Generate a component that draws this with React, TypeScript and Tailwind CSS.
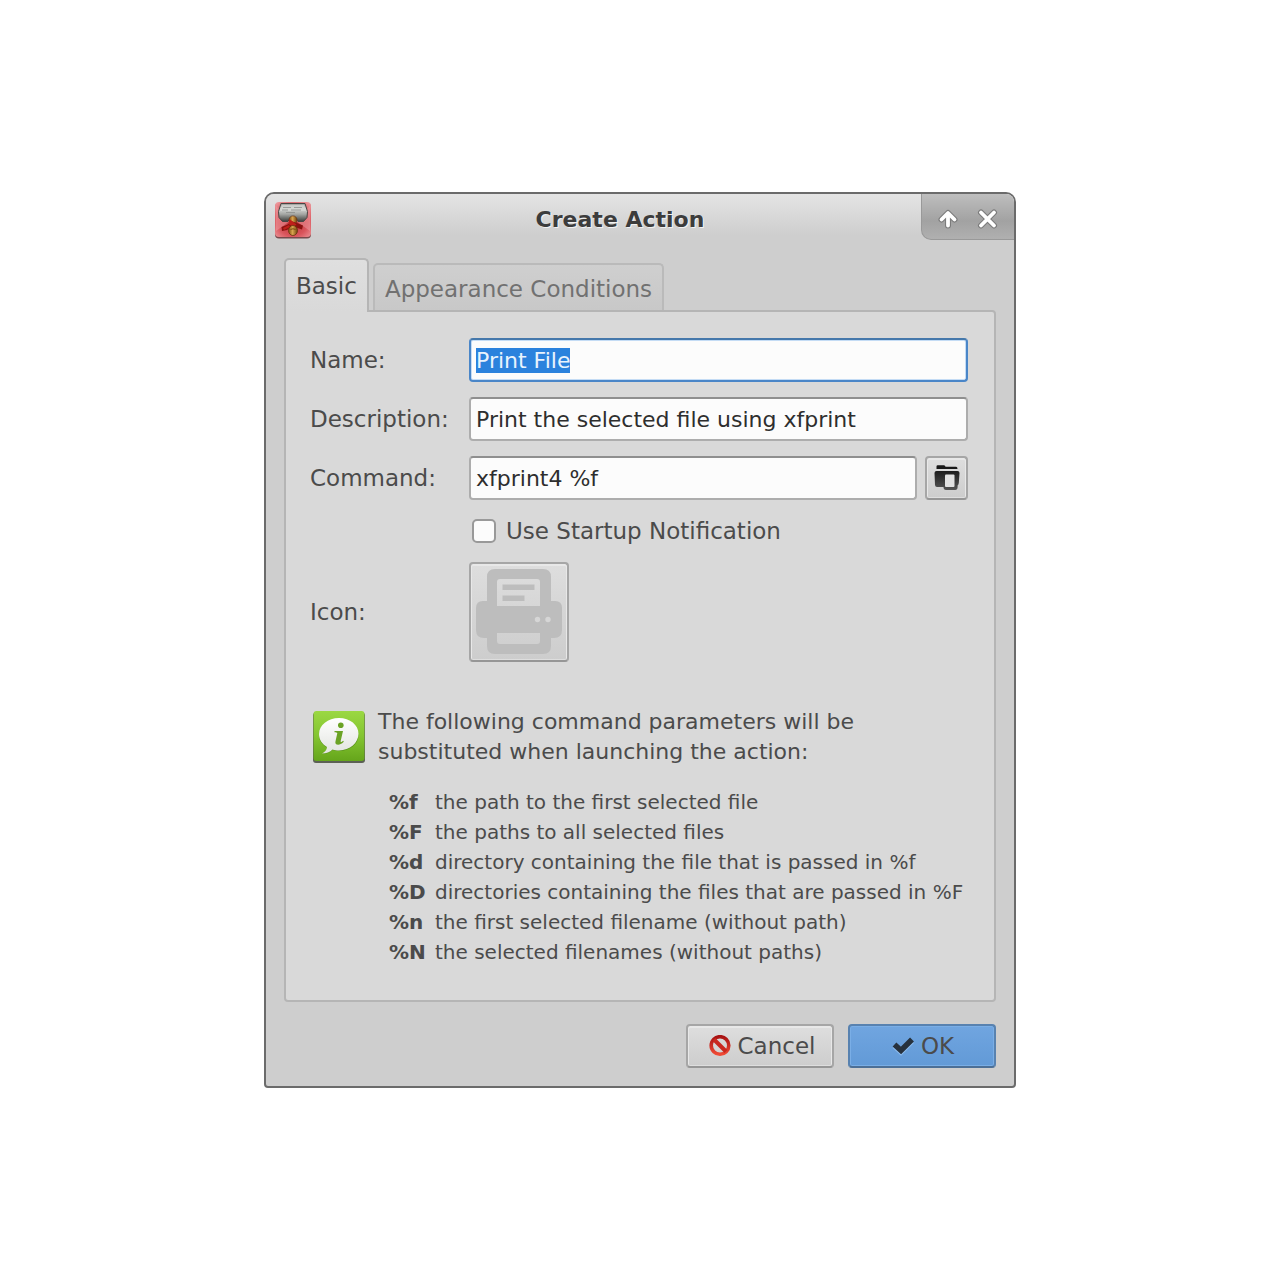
import { useEffect, useRef } from "react";

const inputClass =
  "h-11 w-full min-w-0 rounded-[4px] border-2 border-[#adadad] border-t-[#8f8f8f] bg-[#fcfcfc] px-[5px] text-[22px] leading-[30px] text-[#2e2e2e] outline-none selection:bg-[#2b82dd] selection:text-[#e8f3fd] focus:border-[#4a86c8] focus:border-t-[#4578ab] focus:shadow-[inset_0_0_0_1px_#c4dcf5]";

const buttonClass =
  "rounded-[4px] border-2 border-[#a6a6a6] border-b-[#969696] bg-linear-to-b from-[#dedede] to-[#cdcdcd] shadow-[inset_0_1px_0_1px_#e8e8e8,inset_0_0_0_1px_#dedede]";

const parameters = [
  ["%f", "the path to the first selected file"],
  ["%F", "the paths to all selected files"],
  ["%d", "directory containing the file that is passed in %f"],
  ["%D", "directories containing the files that are passed in %F"],
  ["%n", "the first selected filename (without path)"],
  ["%N", "the selected filenames (without paths)"],
];

function AppIcon() {
  return (
    <svg viewBox="0 0 38 38" className="h-[38px] w-[38px]" aria-hidden="true">
      <defs>
        <radialGradient id="app-red" cx=".5" cy=".55" r=".7">
          <stop offset="0" stopColor="#b92f35" />
          <stop offset=".6" stopColor="#d9545b" />
          <stop offset="1" stopColor="#ee9b9f" />
        </radialGradient>
        <linearGradient id="app-metal" x1="0" y1="0" x2="0" y2="1">
          <stop offset="0" stopColor="#9c9e9b" />
          <stop offset=".3" stopColor="#d5d7d4" />
          <stop offset=".6" stopColor="#a3a5a2" />
          <stop offset="1" stopColor="#3c3e3b" />
        </linearGradient>
        <linearGradient id="app-wood" x1="0" y1="0" x2="1" y2="0">
          <stop offset="0" stopColor="#80500f" />
          <stop offset=".45" stopColor="#d9a44f" />
          <stop offset="1" stopColor="#6e430c" />
        </linearGradient>
      </defs>
      <rect x="1" y="2" width="36" height="35.5" rx="4" fill="#77494b" />
      <rect x="1" y="1" width="36" height="35" rx="4" fill="url(#app-red)" />
      <path d="M2 5l14 15L2 30zM36 5L22 20l14 10z" fill="#f0a5a8" opacity=".45" />
      <path d="M7 2.500h24l2.500 8-.5 6-3.500 4H24l-2-3h-6l-2 3H8.500l-3.500-4-.5-6z" fill="url(#app-metal)" stroke="#4a4543" />
      <path d="M8 4h22l2 6H6z" fill="#d5d7d4" opacity=".7" />
      <path d="M9 6.500h8m3 0h8M8 9h6m3 0h10M12 11.500h9" stroke="#8c8e8b" strokeWidth=".8" />
      <path d="M15 19c0-5.500 8-5.500 8 0l-1.500 5h-5z" fill="url(#app-wood)" stroke="#6b3210" strokeWidth=".6" />
      <path d="M14 19l9 3 6 2.500-1 4-6-2-4-1-5 3.500-5 1-.5-4 5-2 4-2z" fill="#8b1210" />
      <path d="M15.500 18l7 5.500-3 2.500-5-3zM9 27l6-3 1 2-6 3z" fill="#bf201a" />
      <ellipse cx="19" cy="29.500" rx="4.500" ry="5" fill="url(#app-wood)" stroke="#6b3210" strokeWidth=".8" />
      <path d="M16.500 28.500q2.500-1.500 5 0" stroke="#7a4a12" fill="none" />
    </svg>
  );
}

function InfoIcon() {
  return (
    <svg viewBox="0 0 54 54" className="h-[54px] w-[54px] shrink-0" aria-hidden="true">
      <defs>
        <linearGradient id="info-green" x1="0" y1="0" x2="0" y2="1">
          <stop offset="0" stopColor="#9bd842" />
          <stop offset=".5" stopColor="#84c531" />
          <stop offset="1" stopColor="#65a51b" />
        </linearGradient>
        <linearGradient id="info-white" x1="0" y1="0" x2="0" y2="1">
          <stop offset="0" stopColor="#fff" />
          <stop offset="1" stopColor="#e2e4e0" />
        </linearGradient>
        <filter id="info-soft" x="-10%" y="-10%" width="120%" height="120%">
          <feGaussianBlur stdDeviation=".7" />
        </filter>
      </defs>
      <rect x="1" y="2.500" width="52" height="50.500" rx="3" fill="#5b6054" filter="url(#info-soft)" />
      <rect x="1.500" y="1" width="51" height="50" rx="3" fill="url(#info-green)" />
      <path
        d="M27 9.500c11 0 19.500 7 19.500 15.700S38 41 27 41c-2.500 0-4.300-.3-6.500-1-2.500 2.500-6 4-10.500 4 3-1.500 4.800-3.700 5-6.500C10 34.500 7 30.500 7 25.200 7 16.500 16 9.500 27 9.500z"
        fill="#4e8516"
        opacity=".7"
        filter="url(#info-soft)"
      />
      <path
        d="M27 8c11 0 19.500 7 19.500 15.800S38 40.500 27 40.500c-2.500 0-4.300-.3-6.500-1-2.500 2.500-6 4-10.500 4 3-1.500 4.800-3.700 5-6.500C10 34 7 29.500 7 24 7 15 16 8 27 8z"
        fill="url(#info-white)"
      />
      <circle cx="28.800" cy="15.300" r="2.800" fill="#6ba325" />
      <path
        d="M22.500 21h8.500l-2.300 10c-.3 1.200.5 1.300 2.500-.3l.6 1c-2.300 2.300-4 3-5.600 3-2.500 0-3.200-1.300-2.700-3.500l1.800-8c-.5-.8-1.300-1-2.800-1z"
        fill="#6ba325"
      />
    </svg>
  );
}

function FolderIcon() {
  return (
    <svg viewBox="0 0 26 26" className="h-[26px] w-[26px]" aria-hidden="true">
      <defs>
        <linearGradient id="folder-dark" x1="0" y1="0" x2="0" y2="1">
          <stop offset="0" stopColor="#1c1c1c" />
          <stop offset="1" stopColor="#555" />
        </linearGradient>
      </defs>
      <path d="M2.500 4V1.500q0-1.200 1.200-1.200H10q1.200 0 1.500 1.500H22q1.500 0 1.500 2.200z" fill="#181818" />
      <path d="M2.500 6h21q2 0 2 2l-.7 10q-.2 1.500-1.200 2.500v1.500q0 3-2.500 3H12q-2.500 0-2.500-3H3q-1.800 0-2-2L.5 8q0-2 2-2z" fill="url(#folder-dark)" />
      <rect x="11" y="9.500" width="9.500" height="12.500" rx="1" fill="#e2e2e2" />
    </svg>
  );
}

function PrinterIcon() {
  return (
    <svg viewBox="0 0 86 86" className="h-[86px] w-[86px]" aria-hidden="true">
      <path
        fillRule="evenodd"
        fill="#bdbdbd"
        d="M19 0h48q8 0 8 8v24h4q7 0 7 7v22q0 8-8 8h-3v8q0 8-8 8H19q-8 0-8-8v-8H8q-8 0-8-8V39q0-7 7-7h4V8q0-8 8-8zM24 10q-3 0-3 3v24h43V13q0-3-3-3zM21 64v8q0 3 3 3h37q3 0 3-3v-8z"
      />
      <path d="M26.500 15.500h32v5.500h-32zM26.500 26.500h22v5.500h-22z" fill="#bdbdbd" />
      <circle cx="61.500" cy="50.500" r="2.700" fill="#d6d6d6" />
      <circle cx="72" cy="50.500" r="2.700" fill="#d6d6d6" />
    </svg>
  );
}

export default function App() {
  const nameRef = useRef<HTMLInputElement>(null);

  useEffect(() => {
    nameRef.current?.focus();
    nameRef.current?.select();
  }, []);

  return (
    <main className="flex min-h-screen items-center justify-center bg-white font-['DejaVu_Sans',sans-serif] text-[23px] leading-[30px] text-[#4b4b4b]">
      <form
        onSubmit={(e) => e.preventDefault()}
        className="w-full max-w-[752px] overflow-hidden rounded-t-[10px] rounded-b-[4px] border-2 border-[#6b6b6b] bg-[#cecece]"
      >
        <header className="grid h-16 grid-cols-[53px_1fr_93px] items-start bg-linear-to-b from-[#e4e4e4] to-[#cecece] to-65%">
          <div className="pt-[7px] pl-2">
            <AppIcon />
          </div>
          <h1 className="pt-[11px] text-center text-[22px] font-bold text-[#3c3c3c] [text-shadow:1px_1px_0_#f2f2f2]">
            Create Action
          </h1>
          <div className="flex h-[46px] items-center justify-center gap-3 rounded-bl-[10px] border-b border-l border-[#999] bg-linear-to-b from-[#bebebe] via-[#a2a2a2] via-60% to-[#b0b0b0] pt-1">
            <button type="button" aria-label="Shade window" className="h-7 w-7">
              <svg viewBox="0 0 28 28" className="h-7 w-7" strokeLinecap="round" strokeLinejoin="round" fill="none">
                <path d="M14 20.500V9M7.500 14.500L14 8l6.500 6.500" stroke="#7c7c7c" strokeWidth="6" />
                <path d="M14 20.500V9M7.500 14.500L14 8l6.500 6.500" stroke="#fff" strokeWidth="3.800" />
              </svg>
            </button>
            <button type="button" aria-label="Close window" className="h-7 w-7">
              <svg viewBox="0 0 28 28" className="h-7 w-7" strokeLinecap="round" fill="none">
                <path d="M7 7.500l13 13M20 7.500l-13 13" stroke="#7c7c7c" strokeWidth="6" />
                <path d="M7 7.500l13 13M20 7.500l-13 13" stroke="#fff" strokeWidth="3.800" />
              </svg>
            </button>
          </div>
        </header>

        <div className="px-[18px] pb-[18px]">
          <div role="tablist" className="relative z-10 -mb-[2px] flex h-[54px] items-start gap-1">
            <button
              type="button"
              role="tab"
              aria-selected="true"
              className="h-[54px] rounded-t-[5px] border-2 border-b-0 border-[#b5b5b5] bg-linear-to-b from-[#dfdfdf] to-[#d9d9d9] px-[10px]"
            >
              Basic
            </button>
            <button
              type="button"
              role="tab"
              aria-selected="false"
              className="mt-[5px] h-[47px] rounded-t-[5px] border-2 border-b-0 border-[#bababa] bg-linear-to-b from-[#cfcfcf] to-[#c8c8c8] px-[10px] pt-[2px] text-[#717171]"
            >
              Appearance Conditions
            </button>
          </div>

          <section role="tabpanel" className="rounded-b-[4px] rounded-tr-[4px] border-2 border-[#b5b5b5] bg-[#d9d9d9] pt-[26px] pr-[26px] pb-[33px] pl-6">
            <div className="grid grid-cols-[159px_1fr] items-center gap-y-[15px]">
              <label htmlFor="name">Name:</label>
              <input id="name" ref={nameRef} defaultValue="Print File" className={inputClass} />

              <label htmlFor="description">Description:</label>
              <input id="description" defaultValue="Print the selected file using xfprint" className={inputClass} />

              <label htmlFor="command">Command:</label>
              <div className="flex gap-2">
                <input id="command" defaultValue="xfprint4 %f" className={inputClass} />
                <button type="button" aria-label="Browse" className={`${buttonClass} flex h-11 w-[43px] shrink-0 items-center justify-center`}>
                  <FolderIcon />
                </button>
              </div>

              <label className="col-start-2 flex h-8 items-center gap-[10px] pl-[3px]">
                <input type="checkbox" className="h-6 w-6 shrink-0 appearance-none rounded-[5px] border-2 border-[#999] bg-[#fcfcfc] checked:bg-[#4a86c8]" />
                Use Startup Notification
              </label>

              <label htmlFor="icon">Icon:</label>
              <button id="icon" type="button" className={`${buttonClass} flex h-[100px] w-[100px] items-center justify-center`}>
                <PrinterIcon />
              </button>
            </div>

            <div className="mt-[45px] flex items-center gap-3 pl-[2px]">
              <InfoIcon />
              <p className="text-[22px] leading-[30px]">
                The following command parameters will be
                <br />
                substituted when launching the action:
              </p>
            </div>

            <table className="mt-5 ml-[79px] text-[20px] leading-[30px]">
              <tbody>
                {parameters.map(([code, text]) => (
                  <tr key={code}>
                    <th scope="row" className="w-[46px] p-0 text-left font-bold">{code}</th>
                    <td className="p-0 whitespace-nowrap">{text}</td>
                  </tr>
                ))}
              </tbody>
            </table>
          </section>

          <footer className="mt-[22px] flex justify-end gap-[14px]">
            <button type="button" className={`${buttonClass} flex h-11 w-[148px] items-center justify-center gap-[7px] pl-1`}>
              <svg viewBox="0 0 22 22" className="h-[22px] w-[22px]" fill="none" aria-hidden="true">
                <defs>
                  <linearGradient id="cancel-red" x1="0" y1="0" x2="0" y2="1">
                    <stop offset="0" stopColor="#a81313" />
                    <stop offset="1" stopColor="#ef4a35" />
                  </linearGradient>
                </defs>
                <circle cx="11" cy="10.500" r="8.800" stroke="url(#cancel-red)" strokeWidth="3.600" />
                <path d="M5 4.500l12 12" stroke="#c9281f" strokeWidth="4" />
              </svg>
              Cancel
            </button>
            <button
              type="submit"
              className="flex h-11 w-[148px] items-center justify-center gap-[7px] rounded-[4px] border-2 border-[#5882b0] border-b-[#4c6f96] bg-linear-to-b from-[#70a5e0] to-[#629ad7] pl-[2px] shadow-[inset_0_0_0_1px_#7aaee6]"
            >
              <svg viewBox="0 0 22 22" className="h-[22px] w-[22px]" fill="none" aria-hidden="true">
                <path d="M2.500 11l6.500 6L20 6" stroke="#8bbbed" strokeWidth="5.500" />
                <path d="M2.500 9.500l6.500 6L20 4.500" stroke="#26313d" strokeWidth="5.500" />
              </svg>
              OK
            </button>
          </footer>
        </div>
      </form>
    </main>
  );
}
